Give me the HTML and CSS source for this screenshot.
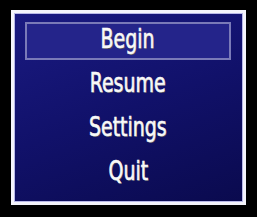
FILE: index.html
```html
<!DOCTYPE html>
<html lang="en">

<head>
    <meta charset="UTF-8">
    <meta name="viewport" content="width=device-width, initial-scale=1.0">
    <title>Main Menu</title>

    <link rel="stylesheet" href="styles.css">

</head>

<body>
    <!-- Title menu window -->
    <div class="menu-window">
        <ul class="menu">
            <li class="menu-item selected"><span class="label">Begin</span></li>
            <li class="menu-item"><span class="label">Resume</span></li>
            <li class="menu-item"><span class="label">Settings</span></li>
            <li class="menu-item"><span class="label">Quit</span></li>
        </ul>
    </div>
</body>

</html>
```

FILE: styles.css
```css
body {
    margin: 0;
    background: #000;
    width: 257px;
    height: 217px;
    overflow: hidden;
}

/* Window frame */
.menu-window {
    box-sizing: border-box;
    width: 235px;
    height: 195px;
    margin: 10px 0 0 11px;
    border: 3px solid #f4f4fc;
    box-shadow: inset 0 0 0 1px #b8b8e8;
    background: linear-gradient(160deg, #1a1a82 0%, #11116a 50%, #0a0a4e 100%);
    padding: 9px 12px 0 11px;
}

.menu {
    list-style: none;
    margin: 0;
    padding: 0;
    display: flex;
    flex-direction: column;
    gap: 6px;
}

.menu-item {
    box-sizing: border-box;
    height: 38px;
    display: flex;
    align-items: center;
    justify-content: center;
    border: 2px solid transparent;
    padding-bottom: 6px;
}

.menu-item.selected {
    border-color: #7a7ab8;
    background: #24248a;
}

/* Pixel style text */
.label {
    display: inline-block;
    font-family: "DejaVu Sans Condensed", "DejaVu Sans", sans-serif;
    font-size: 27px;
    line-height: 27px;
    color: #f8f8f8;
    text-shadow: 1px 1px 0 #4a4a5a;
    transform: scaleX(0.78);
    -webkit-text-stroke: 0.6px #f8f8f8;
}
```
